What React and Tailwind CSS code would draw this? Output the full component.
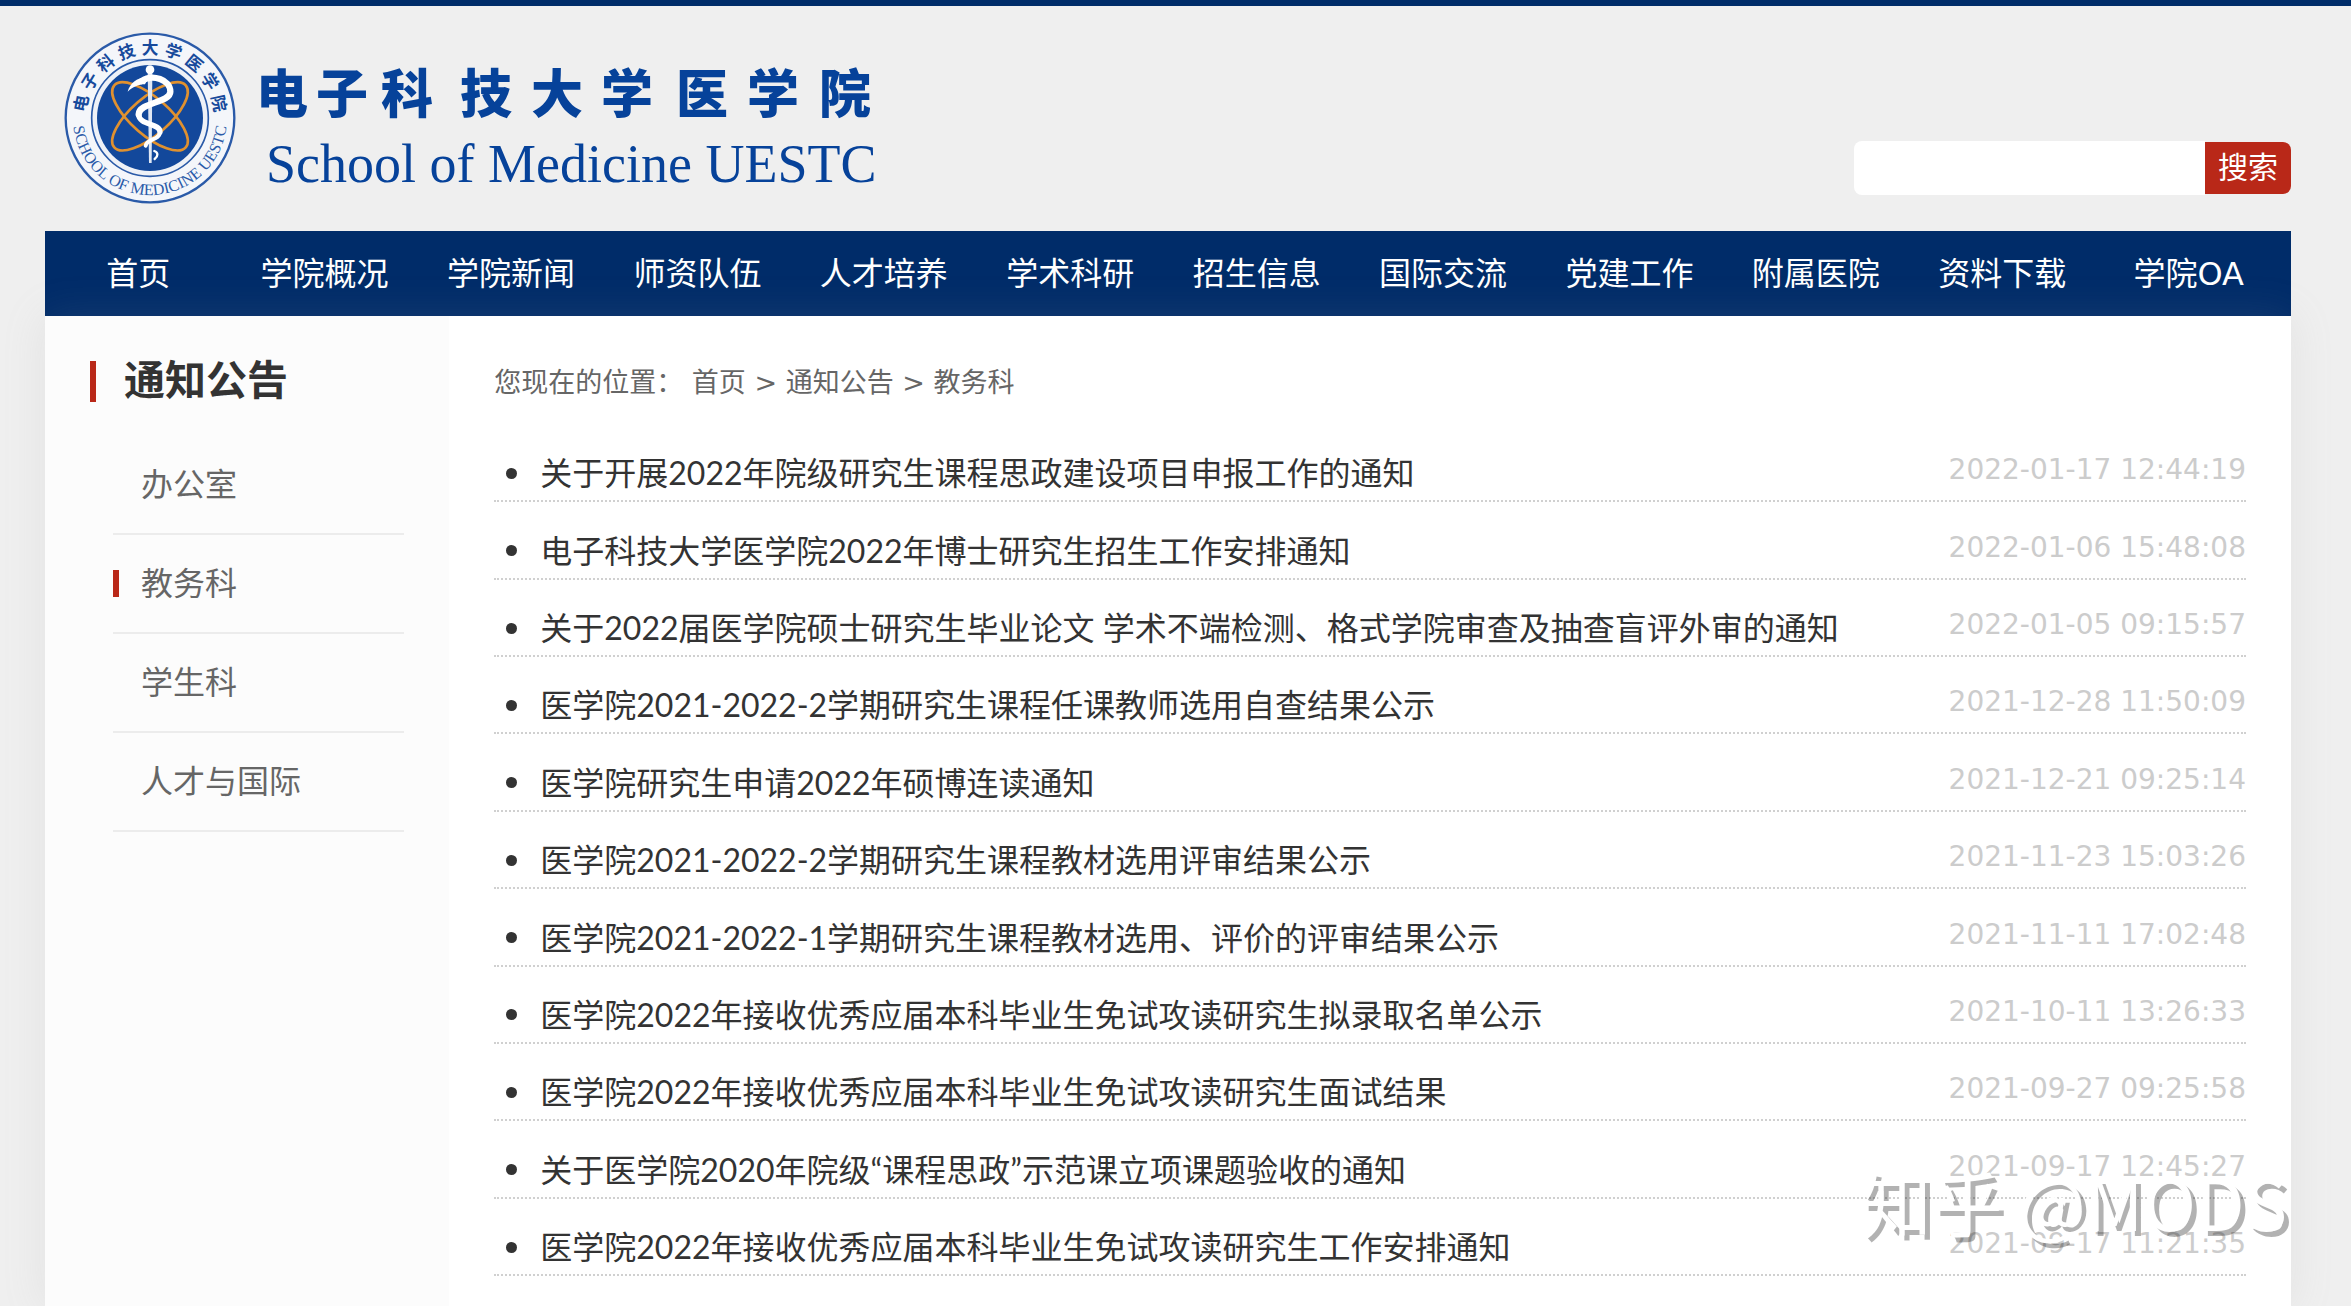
import { useState } from "react";

const navItems = [
    "首页", "学院概况", "学院新闻", "师资队伍", "人才培养", "学术科研",
    "招生信息", "国际交流", "党建工作", "附属医院", "资料下载", "学院OA",
];

const sideItems = ["办公室", "教务科", "学生科", "人才与国际"];

const notices = [
    { title: "关于开展2022年院级研究生课程思政建设项目申报工作的通知", date: "2022-01-17 12:44:19" },
    { title: "电子科技大学医学院2022年博士研究生招生工作安排通知", date: "2022-01-06 15:48:08" },
    { title: "关于2022届医学院硕士研究生毕业论文 学术不端检测、格式学院审查及抽查盲评外审的通知", date: "2022-01-05 09:15:57" },
    { title: "医学院2021-2022-2学期研究生课程任课教师选用自查结果公示", date: "2021-12-28 11:50:09" },
    { title: "医学院研究生申请2022年硕博连读通知", date: "2021-12-21 09:25:14" },
    { title: "医学院2021-2022-2学期研究生课程教材选用评审结果公示", date: "2021-11-23 15:03:26" },
    { title: "医学院2021-2022-1学期研究生课程教材选用、评价的评审结果公示", date: "2021-11-11 17:02:48" },
    { title: "医学院2022年接收优秀应届本科毕业生免试攻读研究生拟录取名单公示", date: "2021-10-11 13:26:33" },
    { title: "医学院2022年接收优秀应届本科毕业生免试攻读研究生面试结果", date: "2021-09-27 09:25:58" },
    { title: "关于医学院2020年院级“课程思政”示范课立项课题验收的通知", date: "2021-09-17 12:45:27" },
    { title: "医学院2022年接收优秀应届本科毕业生免试攻读研究生工作安排通知", date: "2021-09-17 11:21:35" },
];

const emblemChars = ["电", "子", "科", "技", "大", "学", "医", "学", "院"];

function Emblem() {
    return (
        <svg className="h-[174px] w-[174px] shrink-0" viewBox="0 0 522 522" aria-hidden="true">
            <defs>
                <path id="ring" d="M 30 261 A 231 231 0 0 0 492 261" />
            </defs>
            <circle cx="261" cy="261" r="253" fill="#f4f6fa" stroke="#2a5aa8" strokeWidth="7" />
            <circle cx="261" cy="261" r="175" fill="#eef1f7" stroke="#2a5aa8" strokeWidth="5" />
            <circle cx="261" cy="261" r="159" fill="#13489b" />

            {/* school name round the ring */}
            {emblemChars.map((c, i) => (
                <text
                    key={i}
                    x="261"
                    y="68"
                    textAnchor="middle"
                    fontSize="50"
                    fontWeight="700"
                    fill="#174a9c"
                    className="font-['Noto_Sans_CJK_SC',sans-serif]"
                    transform={`rotate(${(i - 4) * 19.5} 261 261)`}
                >
                    {c}
                </text>
            ))}
            <text fontSize="48" fill="#2a5aa8" textAnchor="middle" className="font-['Liberation_Serif',serif]">
                <textPath href="#ring" startOffset="50%">SCHOOL OF MEDICINE UESTC</textPath>
            </text>

            {/* atom orbits */}
            <g fill="none" stroke="#e0912f" strokeWidth="8">
                <ellipse cx="261" cy="256" rx="142" ry="56" transform="rotate(41 261 256)" />
                <ellipse cx="261" cy="256" rx="142" ry="56" transform="rotate(-41 261 256)" />
            </g>

            {/* staff and snake */}
            <path d="M254 120 H268 L266 396 H258 Z" fill="#dfe7f4" />
            <circle cx="261" cy="116" r="13" fill="#fff" />
            <g fill="none" stroke="#fff" strokeLinecap="round">
                <path d="M236 150 C268 128 322 146 322 182 C322 216 227 214 227 250" strokeWidth="19" />
                <path d="M227 250 C227 284 293 276 291 304" strokeWidth="16" />
                <path d="M291 304 C289 328 252 322 248 344" strokeWidth="12" />
                <path d="M274 360 C286 364 286 376 275 384" strokeWidth="7" />
            </g>
            <path d="M194 182 C202 156 222 138 256 140 L246 160 C228 160 208 168 194 182 Z" fill="#fff" />
        </svg>
    );
}

function Logo() {
    return (
        <a href="#" aria-label="电子科技大学医学院" className="flex items-start pl-[18px] pt-[25px]">
            <Emblem />
            <svg className="ml-[11px] mt-[10px] h-[160px] w-[640px]" viewBox="0 0 640 160" fill="#06429a">
                <text
                    x="34 94 159 238 309 379 454 525 597"
                    y="72"
                    textAnchor="middle"
                    fontSize="52"
                    fontWeight="900"
                    className="font-['Noto_Sans_CJK_SC',sans-serif]"
                >
                    电子科技大学医学院
                </text>
                <text x="18" y="141" fontSize="54" className="font-['Liberation_Serif',serif]">
                    School of Medicine UESTC
                </text>
            </svg>
        </a>
    );
}

function App() {
    const [keyword, setKeyword] = useState("");
    const [active, setActive] = useState("教务科");

    const handleSearch = (event) => {
        event.preventDefault();
    };

    return (
        <div className="flex min-h-screen flex-col overflow-hidden border-t-[6px] border-[#002c69] bg-[#efefef] font-['DejaVu_Sans','Noto_Sans_CJK_SC',sans-serif] text-[#333]">
            <div className="ml-[45px] mr-[60px] flex flex-1 flex-col">
                <header className="flex h-[225px] justify-between">
                    <Logo />
                    <form onSubmit={handleSearch} className="mt-[135px] flex h-[54px] items-center">
                        <input
                            type="text"
                            aria-label="搜索"
                            className="h-[54px] w-[351px] rounded-l-lg bg-white px-3 text-[28px] outline-none"
                            value={keyword}
                            onChange={(e) => setKeyword(e.target.value)}
                        />
                        <button type="submit" className="h-[52px] w-[86px] cursor-pointer rounded-r-lg bg-[#b92818] text-[30px] leading-[52px] text-white">
                            搜索
                        </button>
                    </form>
                </header>

                <nav className="flex h-[85px] bg-[#002c69]">
                    {navItems.map((item) => (
                        <a key={item} href="#" className="w-[8.3%] text-center text-[32px] leading-[86px] whitespace-nowrap text-white">
                            {item}
                        </a>
                    ))}
                </nav>

                <div className="relative flex flex-1 bg-white shadow-[0_0_40px_rgba(160,160,160,0.15)]">
                    <aside className="w-[18%] bg-[#fcfcfc] px-[45px] pt-[45px]">
                        <h2 className="flex items-center text-[41px] leading-[41px] font-bold">
                            <span className="mr-[28px] h-[41px] w-[6px] bg-[#b92818]" />
                            通知公告
                        </h2>
                        <ul className="mt-[34px] ml-[23px]">
                            {sideItems.map((item) => (
                                <li key={item} className="border-b-2 border-[#ececec]">
                                    <a
                                        href="#"
                                        onClick={() => setActive(item)}
                                        className="flex h-[97px] items-center text-[32px] text-[#666]"
                                    >
                                        <span className={`mr-[22px] h-[27px] w-[6px] ${active === item ? "bg-[#b92818]" : ""}`} />
                                        {item}
                                    </a>
                                </li>
                            ))}
                        </ul>
                    </aside>

                    <main className="flex flex-1 flex-col px-[45px] pb-[30px]">
                        <div className="pt-[47px] text-[27px] leading-[40px] text-[#666]">
                            您现在的位置： <a href="#">首页</a> &gt; <a href="#">通知公告</a> &gt; <a href="#">教务科</a>
                        </div>
                        <ul className="mt-[22px] grid flex-1 auto-rows-fr">
                            {notices.map((n) => (
                                <li key={n.title} className="flex items-end justify-between border-b-2 border-dotted border-[#d0d0d0]">
                                    <a href="#" className="flex items-center text-[32px] leading-[54px] font-['Lato','Noto_Sans_CJK_SC',sans-serif]">
                                        <span className="mr-[23px] ml-[12px] h-[11px] w-[11px] rounded-full bg-[#333]" />
                                        {n.title}
                                    </a>
                                    <span className="text-[28px] leading-[60px] text-[#ccc]">{n.date}</span>
                                </li>
                            ))}
                        </ul>
                    </main>

                    <div className="pointer-events-none absolute right-1 bottom-[54px] text-[71px] leading-[104px] whitespace-nowrap text-white font-['Noto_Sans_CJK_SC',sans-serif] [text-shadow:5px_5px_0_rgba(0,0,0,0.3)]">
                        知乎 @MODS
                    </div>
                </div>
            </div>
        </div>
    );
}

export default App;
